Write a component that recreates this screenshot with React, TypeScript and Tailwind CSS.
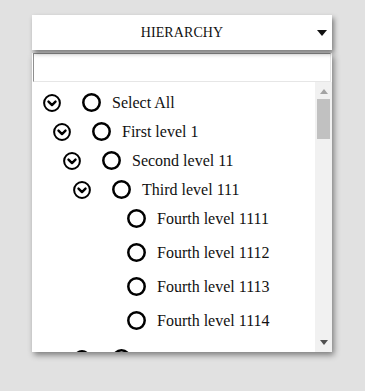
import React from "react";

type Node = { label: string; level: number; leaf?: boolean; last?: boolean };

const rows: Node[] = [
  { label: "Select All", level: 0 },
  { label: "First level 1", level: 1 },
  { label: "Second level 11", level: 2 },
  { label: "Third level 111", level: 3 },
  { label: "Fourth level 1111", level: 4, leaf: true },
  { label: "Fourth level 1112", level: 4, leaf: true },
  { label: "Fourth level 1113", level: 4, leaf: true },
  { label: "Fourth level 1114", level: 4, leaf: true, last: true },
  { label: "Third level 112", level: 3 },
];

const indent = ["pl-[11px]", "pl-[21px]", "pl-[31px]", "pl-[41px]", "pl-[95px]"];

const ChevronCircle = () => (
  <svg width="18" height="18" viewBox="0 0 18 18" className="shrink-0">
    <circle cx="9" cy="9" r="7.9" fill="none" stroke="#000" strokeWidth="2" />
    <polyline points="5.5,7.6 9,11.1 12.5,7.6" fill="none" stroke="#000" strokeWidth="2.4" strokeLinecap="round" strokeLinejoin="round" />
  </svg>
);

const Radio = () => (
  <svg width="19" height="19" viewBox="0 0 19 19" className="shrink-0">
    <circle cx="9.5" cy="9.5" r="8.2" fill="none" stroke="#000" strokeWidth="2.5" />
  </svg>
);

const Row = ({ node }: { node: Node }) => (
  <div className={`flex items-center h-[29px] ${indent[node.level]} ${node.last ? "mb-[9px]" : node.leaf ? "mb-[5px]" : ""}`}>
    {!node.leaf && (
      <span className="mr-[21px] flex">
        <ChevronCircle />
      </span>
    )}
    <Radio />
    <span className="ml-[11px] text-[16px] leading-none text-[#111] whitespace-nowrap">{node.label}</span>
  </div>
);

export default function App() {
  return (
    <div className="w-[365px] h-[391px] bg-[#e1e1e1] pt-[15px] overflow-hidden" style={{ fontFamily: '"Liberation Serif", "Times New Roman", serif' }}>
      <div className="ml-[32px] w-[300px]">
        <div className="relative h-[35px] bg-white shadow-[2px_3px_5px_rgba(0,0,0,0.45)] flex items-center justify-center">
          <span className="text-[14px] text-[#111] tracking-[0.1px]">HIERARCHY</span>
          <svg width="10" height="6" viewBox="0 0 10 6" className="absolute right-[5px] top-[15px]">
            <polygon points="0,0 10,0 5,6" fill="#111" />
          </svg>
        </div>

        <div className="mt-[3px] h-[299px] bg-white shadow-[2px_3px_6px_rgba(0,0,0,0.45)] flex flex-col">
          <div className="mx-[1px] h-[29px] border border-t-[#8f8f8f] border-l-[#8f8f8f] border-r-[#e6e6e6] border-b-[#e6e6e6]" />
          <div className="flex flex-1 min-h-0">
            <div className="flex-1 overflow-hidden pt-[6px]">
              {rows.map((n, i) => (
                <Row key={i} node={n} />
              ))}
            </div>
            <div className="w-[17px] bg-[#f1f1f1] flex flex-col items-center">
              <svg width="8" height="5" viewBox="0 0 8 5" className="mt-[7px]">
                <polygon points="0,5 8,5 4,0" fill="#a3a3a3" />
              </svg>
              <div className="mt-[5px] w-[13px] h-[40px] bg-[#c1c1c1]" />
              <div className="flex-1" />
              <svg width="8" height="5" viewBox="0 0 8 5" className="mb-[7px]">
                <polygon points="0,0 8,0 4,5" fill="#505050" />
              </svg>
            </div>
          </div>
        </div>
      </div>
    </div>
  );
}
